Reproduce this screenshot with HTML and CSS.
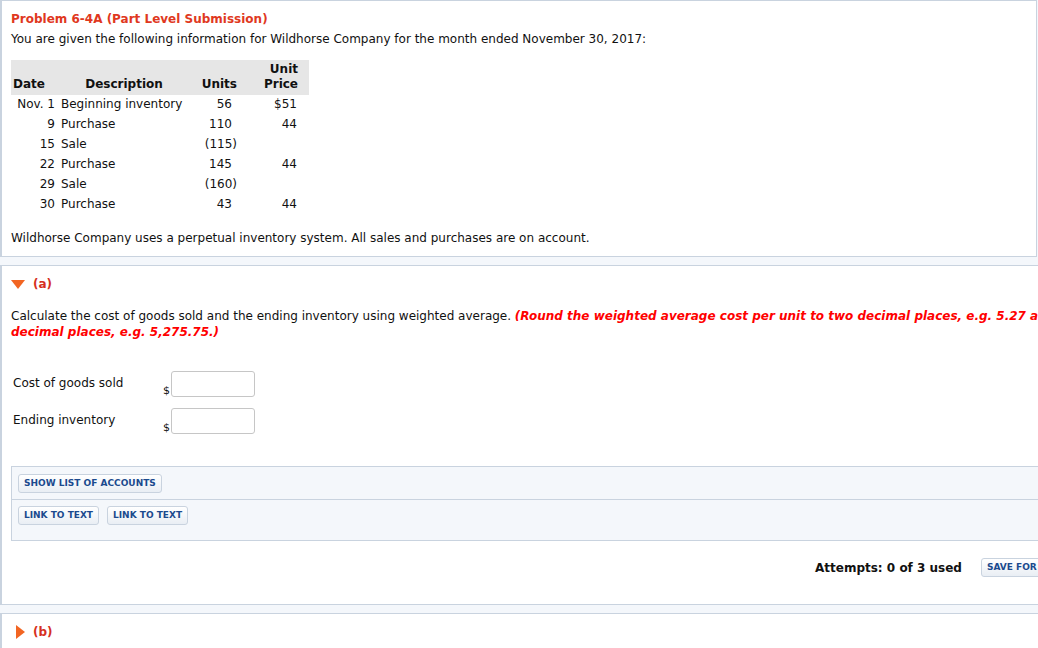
FILE: index.html
```html
<!DOCTYPE html>
<html>
<head>
<meta charset="utf-8">
<link rel="stylesheet" href="styles.css">
</head>
<body>
<div class="page">
  <section class="panel panel-intro">
    <h1 class="title">Problem 6-4A (Part Level Submission)</h1>
    <p class="intro">You are given the following information for Wildhorse Company for the month ended November 30, 2017:</p>
    <table class="data">
      <colgroup>
        <col class="w-date"><col class="w-desc"><col class="w-units"><col class="w-price">
      </colgroup>
      <thead>
        <tr>
          <th class="c-date">Date</th>
          <th class="c-desc">Description</th>
          <th class="c-units">Units</th>
          <th class="c-price">Unit<br>Price</th>
        </tr>
      </thead>
      <tbody>
        <tr><td class="c-date">Nov. 1</td><td class="c-desc">Beginning inventory</td><td class="c-units">56</td><td class="c-price">$51</td></tr>
        <tr><td class="c-date">9</td><td class="c-desc">Purchase</td><td class="c-units">110</td><td class="c-price">44</td></tr>
        <tr><td class="c-date">15</td><td class="c-desc">Sale</td><td class="c-units">(115<span class="hang">)</span></td><td class="c-price"></td></tr>
        <tr><td class="c-date">22</td><td class="c-desc">Purchase</td><td class="c-units">145</td><td class="c-price">44</td></tr>
        <tr><td class="c-date">29</td><td class="c-desc">Sale</td><td class="c-units">(160<span class="hang">)</span></td><td class="c-price"></td></tr>
        <tr><td class="c-date">30</td><td class="c-desc">Purchase</td><td class="c-units">43</td><td class="c-price">44</td></tr>
      </tbody>
    </table>
    <p class="note">Wildhorse Company uses a perpetual inventory system. All sales and purchases are on account.</p>
  </section>

  <section class="panel panel-part">
    <div class="part-head">
      <svg class="tri" width="14" height="9" viewBox="0 0 14 9"><polygon points="0,0 14,0 7,9" fill="#f26522"/></svg>
      <span class="part-label">(a)</span>
    </div>
    <p class="question">Calculate the cost of goods sold and the ending inventory using weighted average. <em class="hint">(Round the weighted average cost per unit to two decimal places, e.g. 5.27 and final answers to 0<br>decimal places, e.g. 5,275.75.)</em></p>
    <div class="answers">
      <div class="answer-row">
        <span class="answer-label">Cost of goods sold</span>
        <span class="dollar">$</span>
        <span class="input"></span>
      </div>
      <div class="answer-row">
        <span class="answer-label">Ending inventory</span>
        <span class="dollar">$</span>
        <span class="input"></span>
      </div>
    </div>
    <div class="tools">
      <div class="tools-row tools-row-accounts">
        <span class="btn">SHOW LIST OF ACCOUNTS</span>
      </div>
      <div class="tools-row tools-row-links">
        <span class="btn">LINK TO TEXT</span>
        <span class="btn">LINK TO TEXT</span>
      </div>
    </div>
    <div class="submit-row">
      <span class="attempts">Attempts: 0 of 3 used</span>
      <span class="btn btn-save">SAVE FOR LATER</span>
    </div>
  </section>

  <section class="panel panel-part panel-collapsed">
    <div class="part-head">
      <svg class="tri-right" width="9" height="14" viewBox="0 0 9 14"><polygon points="0,0 9,7 0,14" fill="#f26522"/></svg>
      <span class="part-label">(b)</span>
    </div>
  </section>
</div>
</body>
</html>
```

FILE: styles.css
```css
html, body {
  margin: 0;
  padding: 0;
}
body {
  background: #f4f7fb;
  font-family: "DejaVu Sans", Verdana, sans-serif;
  font-size: 12px;
  color: #111;
  width: 1038px;
  height: 648px;
  overflow: hidden;
}
.page {
  display: flex;
  flex-direction: column;
  gap: 8px;
}
.panel {
  background: #fff;
  border: 1px solid #c9d3df;
  border-left-width: 2px;
  padding: 0 10px 0 9px;
}
.panel-intro {
  width: 1037px;
  height: 257px;
  box-sizing: border-box;
  padding-top: 10px;
}
.panel-part {
  width: 1100px;
  box-sizing: border-box;
  border-right: none;
  padding-bottom: 10px;
}
.title {
  margin: 0;
  font-size: 12px;
  font-weight: bold;
  color: #e0381e;
  line-height: 16px;
}
.intro {
  margin: 4px 0 0;
  line-height: 16px;
}
.data {
  border-collapse: collapse;
  table-layout: fixed;
  width: 298px;
  margin-top: 13px;
}
.w-date { width: 48px; }
.w-desc { width: 130px; }
.w-units { width: 51px; }
.w-price { width: 69px; }
.data th {
  background: #e6e6e6;
  font-weight: bold;
  vertical-align: bottom;
  line-height: 15px;
  padding: 2px 0 3px;
}
.data td {
  height: 18px;
  padding: 0 0 2px;
  vertical-align: middle;
  line-height: 15px;
  white-space: nowrap;
}
.data .c-date { text-align: right; padding-right: 4px; }
.data th.c-date { text-align: left; padding-left: 2px; padding-right: 0; }
.data .c-desc { text-align: left; padding-left: 2px; }
.data th.c-desc { text-align: center; padding-left: 0; }
.data .c-units { text-align: right; padding-right: 8px; }
.data th.c-units { padding-right: 3px; }
.data .c-price { text-align: right; padding-right: 12px; }
.data th.c-price { padding-right: 11px; }
.hang { margin-right: -5px; }
.note {
  margin: 15px 0 0;
  line-height: 16px;
}
.part-head {
  display: flex;
  align-items: center;
  gap: 8px;
  height: 18px;
  margin-top: 9px;
}
.tri-right { margin-left: 5px; }
.part-label {
  color: #d6301e;
  font-weight: bold;
  font-size: 12px;
}
.question {
  margin: 15px 0 0;
  line-height: 16px;
  white-space: nowrap;
}
.hint {
  color: #f00;
  font-weight: bold;
  font-style: italic;
}
.answers {
  margin-top: 31px;
  display: flex;
  flex-direction: column;
  gap: 11px;
}
.answer-row {
  display: flex;
  align-items: flex-start;
  height: 26px;
}
.answer-label {
  width: 150px;
  padding-left: 2px;
  padding-top: 5px;
}
.dollar {
  padding-top: 13px;
  width: 8px;
  font-size: 11px;
}
.input {
  width: 82px;
  height: 24px;
  border: 1px solid #c6c6c6;
  border-radius: 3px;
  background: #fff;
}
.tools {
  margin-top: 32px;
  background: #f4f7fb;
  border: 1px solid #c9d3df;
  border-right: none;
}
.tools-row {
  display: flex;
  gap: 8px;
  padding: 6px;
}
.tools-row-accounts {
  padding-top: 7px;
}
.tools-row-links {
  border-top: 1px solid #c9d3df;
  padding-bottom: 15px;
}
.btn {
  display: inline-block;
  font-size: 9px;
  font-weight: bold;
  color: #1b4a8e;
  line-height: 17px;
  padding: 0 5px;
  border: 1px solid #c9d3df;
  border-radius: 3px;
  background: linear-gradient(#ffffff, #e9eef4);
  white-space: nowrap;
}
.submit-row {
  display: flex;
  align-items: center;
  height: 53px;
  padding-left: 804px;
  gap: 19px;
}
.attempts {
  font-weight: bold;
  font-size: 12px;
}
.panel-collapsed {
  height: 40px;
}
```
